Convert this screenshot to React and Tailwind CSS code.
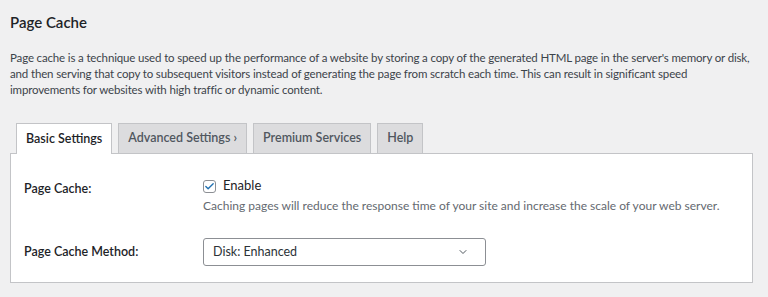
import { Check, ChevronDown } from "lucide-react"

const tabs = [
  { label: "Basic Settings", active: true },
  { label: "Advanced Settings ›", active: false },
  { label: "Premium Services", active: false },
  { label: "Help", active: false },
]

const App = () => {
  return (
    <div className="w-[768px] h-[297px] bg-[#f0f0f1] text-[#3c434a] font-['Lato',sans-serif]">
      <div className="px-[10px] pt-[12px]">
        <h1 className="text-[15px] font-semibold text-[#1d2327] leading-[20px]">Page Cache</h1>
        <p className="mt-[18px] text-[11.5px] leading-[16px] tracking-[-0.15px] w-[750px]">
          Page cache is a technique used to speed up the performance of a website by storing a copy of the generated HTML page in the server's memory or disk,
          and then serving that copy to subsequent visitors instead of generating the page from scratch each time. This can result in significant speed
          improvements for websites with high traffic or dynamic content.
        </p>

        {/* Tabs */}
        <div className="mt-[25px] flex gap-[6px] pl-[6px]">
          {tabs.map((tab) => (
            <div
              key={tab.label}
              className={
                tab.active
                  ? "h-[31px] px-[9px] flex items-center border border-[#c3c4c7] border-b-0 bg-white text-[12.5px] font-semibold text-[#1d2327] -mb-px relative z-10"
                  : "h-[30px] px-[9px] flex items-center border border-[#c3c4c7] border-b-0 bg-[#dcdcde] text-[12.5px] font-semibold text-[#50575e]"
              }
            >
              {tab.label}
            </div>
          ))}
        </div>

        {/* Panel */}
        <div className="w-[743px] h-[130px] bg-white border border-[#c3c4c7] px-[13px] pt-[24px]">
          <div className="flex">
            <div className="w-[179px] text-[12.5px] font-semibold text-[#1d2327] pt-[2px]">Page Cache:</div>
            <div>
              <label className="flex items-center gap-[7px] text-[13px] text-[#1d2327] h-[16px]">
                <span className="w-[13px] h-[13px] rounded-[3px] border border-[#8c8f94] bg-white flex items-center justify-center">
                  <Check size={11} strokeWidth={3} className="text-[#2271b1]" />
                </span>
                Enable
              </label>
              <p className="mt-[4px] text-[12px] leading-[16px] text-[#646970] whitespace-nowrap">
                Caching pages will reduce the response time of your site and increase the scale of your web server.
              </p>
            </div>
          </div>

          <div className="flex items-center mt-[24px]">
            <div className="w-[179px] text-[12.5px] font-semibold text-[#1d2327]">Page Cache Method:</div>
            <div className="w-[283px] h-[28px] border border-[#8c8f94] rounded-[3px] flex items-center justify-between pl-[9px] pr-[16px] text-[12.5px] text-[#2c3338]">
              <span>Disk: Enhanced</span>
              <ChevronDown size={12} strokeWidth={2} className="text-[#50575e]" />
            </div>
          </div>
        </div>
      </div>
    </div>
  )
}

export default App
